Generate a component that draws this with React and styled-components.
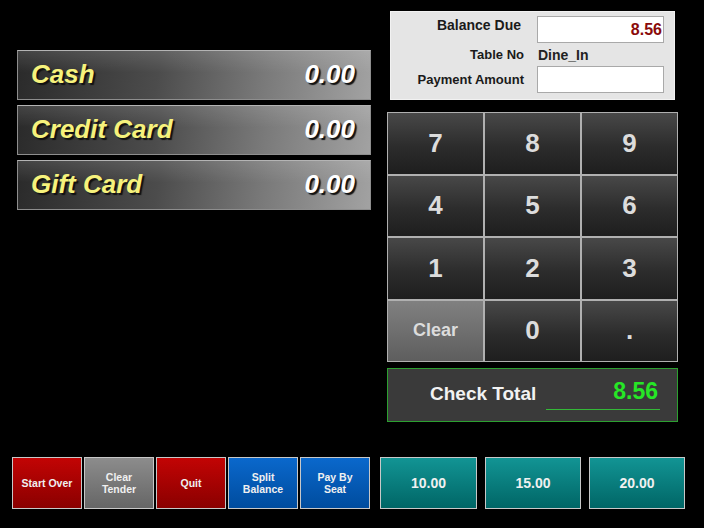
import styled, { createGlobalStyle } from "styled-components";

const Global = createGlobalStyle`
  html, body {
    margin: 0;
    padding: 0;
    background: #000;
  }
  body {
    font-family: Arial, "Liberation Sans", sans-serif;
  }
`;

const Screen = styled.div`
  width: 704px;
  height: 528px;
  background: #000;
  overflow: hidden;
`;

const Top = styled.div`
  display: flex;
  align-items: flex-start;
  height: 422px;
`;

const Tenders = styled.div`
  display: flex;
  flex-direction: column;
  gap: 5px;
  width: 354px;
  margin: 50px 0 0 17px;
`;

const Tender = styled.div`
  display: flex;
  align-items: center;
  justify-content: space-between;
  box-sizing: border-box;
  height: 50px;
  padding: 0 15px 2px 13px;
  border: 1px solid #8e8e8e;
  border-top-color: #b4b4b4;
  background:
    linear-gradient(180deg, rgba(255, 255, 255, 0.12) 0%, rgba(255, 255, 255, 0) 45%),
    linear-gradient(100deg, #2a2a2a 0%, #4c4c4c 40%, #7a7a7a 70%, #a2a2a2 100%);
  font-weight: bold;
  font-style: italic;
  font-size: 26px;
`;

const TenderName = styled.span`
  color: #f6f27c;
  text-shadow: 2px 2px 1px #111;
`;

const TenderAmount = styled.span`
  color: #fff;
  text-shadow: 2px 2px 1px #111;
`;

const Right = styled.div`
  display: flex;
  flex-direction: column;
  width: 291px;
  margin-left: 16px;
`;

const Info = styled.div`
  display: grid;
  grid-template-columns: 133px 127px;
  grid-template-rows: 27px 23px 27px;
  column-gap: 13px;
  align-content: start;
  align-items: center;
  box-sizing: border-box;
  height: 89px;
  margin: 11px 3px 0;
  padding: 4px 9px 0 0;
  background: #e5e5e5;
  border: 1px solid #f2f2f2;
`;

const Label = styled.div`
  text-align: right;
  font-weight: bold;
  font-size: 13px;
  color: #1a1a1a;
`;

const DueLabel = styled(Label)`
  align-self: start;
  margin-top: 1px;
  padding-right: 3px;
  font-size: 14px;
`;

const Field = styled.div`
  box-sizing: border-box;
  height: 27px;
  padding: 0 1px;
  background: #fff;
  border: 1px solid #a9a9a9;
  text-align: right;
  line-height: 25px;
  font-weight: bold;
  font-size: 16px;
  color: #8a0a0a;
`;

const Plain = styled.div`
  font-weight: bold;
  font-size: 14px;
  color: #222;
  padding-left: 1px;
`;

const Pad = styled.div`
  display: grid;
  grid-template-columns: 97px 97px 97px;
  grid-template-rows: repeat(4, 62.5px);
  margin-top: 12px;
`;

const Key = styled.div`
  display: flex;
  align-items: center;
  justify-content: center;
  box-sizing: border-box;
  border: 1px solid #b0b0b0;
  background: ${(p) =>
    p.light
      ? "linear-gradient(180deg, #808080 0%, #5e5e5e 100%)"
      : "linear-gradient(180deg, #484848 0%, #2c2c2c 55%, #1e1e1e 100%)"};
  color: #dcdcdc;
  font-weight: bold;
  font-size: ${(p) => (p.light ? 18 : 26)}px;
`;

const Total = styled.div`
  display: flex;
  align-items: center;
  box-sizing: border-box;
  height: 54px;
  margin-top: 6px;
  padding: 0 0 2px 42px;
  background: #3a3a3a;
  border: 1px solid #2ca030;
`;

const TotalLabel = styled.span`
  color: #f2f2f2;
  font-weight: bold;
  font-size: 19px;
  width: 116px;
`;

const TotalValue = styled.span`
  box-sizing: border-box;
  width: 114px;
  text-align: right;
  padding: 0 2px 4px 0;
  border-bottom: 1px solid #34b838;
  color: #26e626;
  font-weight: bold;
  font-size: 23px;
`;

const Bottom = styled.div`
  display: flex;
  margin: 35px 0 0 12px;
`;

const colors = {
  red: "linear-gradient(180deg, #c20404 0%, #8a0000 100%)",
  gray: "linear-gradient(180deg, #8c8c8c 0%, #666 100%)",
  blue: "linear-gradient(180deg, #0a68cc 0%, #004c9e 100%)",
  teal: "linear-gradient(180deg, #129494 0%, #006666 100%)",
};

const Action = styled.div`
  display: flex;
  align-items: center;
  justify-content: center;
  box-sizing: border-box;
  width: ${(p) => p.w}px;
  height: 52px;
  margin-left: ${(p) => p.gap || 0}px;
  border: 1px solid #c8c8c8;
  background: ${(p) => colors[p.tone]};
  color: #f0f0f0;
  text-align: center;
  font-weight: bold;
  font-size: ${(p) => (p.tone === "teal" ? 14 : 10.5)}px;
  line-height: 1.15;
`;

const tenders = ["Cash", "Credit Card", "Gift Card"];
const keys = ["7", "8", "9", "4", "5", "6", "1", "2", "3", "Clear", "0", "."];

const App = () => {
  return (
    <>
      <Global />
      <Screen>
        <Top>
          <Tenders>
            {tenders.map((t) => (
              <Tender key={t}>
                <TenderName>{t}</TenderName>
                <TenderAmount>0.00</TenderAmount>
              </Tender>
            ))}
          </Tenders>

          <Right>
            <Info>
              <DueLabel>Balance Due</DueLabel>
              <Field>8.56</Field>
              <Label>Table No</Label>
              <Plain>Dine_In</Plain>
              <Label>Payment Amount</Label>
              <Field />
            </Info>

            <Pad>
              {keys.map((k) => (
                <Key key={k} light={k === "Clear"}>
                  {k}
                </Key>
              ))}
            </Pad>

            <Total>
              <TotalLabel>Check Total</TotalLabel>
              <TotalValue>8.56</TotalValue>
            </Total>
          </Right>
        </Top>

        <Bottom>
          <Action w={70} tone="red">Start Over</Action>
          <Action w={70} gap={2} tone="gray">Clear<br />Tender</Action>
          <Action w={70} gap={2} tone="red">Quit</Action>
          <Action w={70} gap={2} tone="blue">Split<br />Balance</Action>
          <Action w={70} gap={2} tone="blue">Pay By<br />Seat</Action>
          <Action w={97} gap={10} tone="teal">10.00</Action>
          <Action w={96} gap={8} tone="teal">15.00</Action>
          <Action w={96} gap={8} tone="teal">20.00</Action>
        </Bottom>
      </Screen>
    </>
  );
};

export default App;
